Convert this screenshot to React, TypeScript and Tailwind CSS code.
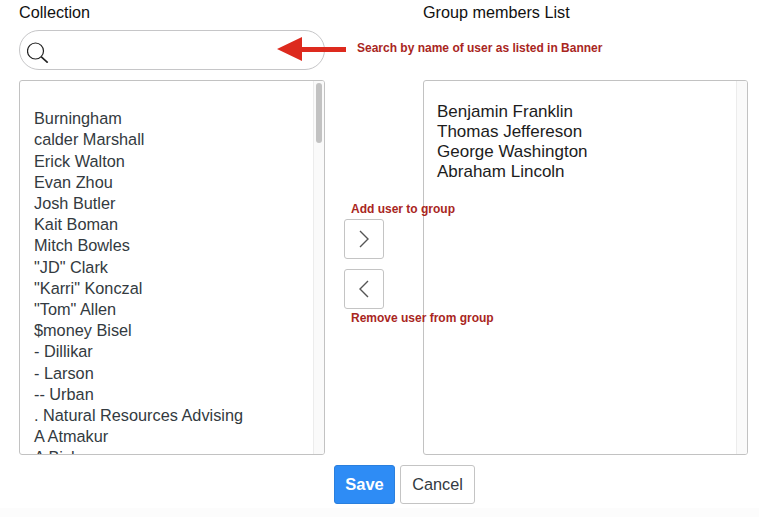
const collection = [
  "Burningham",
  "calder Marshall",
  "Erick Walton",
  "Evan Zhou",
  "Josh Butler",
  "Kait Boman",
  "Mitch Bowles",
  '"JD" Clark',
  '"Karri" Konczal',
  '"Tom" Allen',
  "$money Bisel",
  "- Dillikar",
  "- Larson",
  "-- Urban",
  ". Natural Resources Advising",
  "A Atmakur",
  "A Bishop",
];

const members = ["Benjamin Franklin", "Thomas Jeffereson", "George Washington", "Abraham Lincoln"];

function Note({ children, className }: { children: React.ReactNode; className: string }) {
  return <span className={"absolute text-[12px] leading-[14px] font-bold whitespace-nowrap text-[#a9261e] " + className}>{children}</span>;
}

function MoveButton({ points }: { points: string }) {
  return (
    <button className="w-10 h-10 flex items-center justify-center bg-white border border-[#c4c4c4] rounded-[3px]">
      <svg width="12" height="20" viewBox="0 0 12 20" fill="none" stroke="#555" strokeWidth="1.4">
        <polyline points={points} />
      </svg>
    </button>
  );
}

export default function App() {
  return (
    <div className="relative w-[759px] h-[517px] overflow-hidden bg-white font-['Liberation_Sans',Arial,sans-serif]">
      <div className="flex px-[19px] pt-[3px]">
        {/* Left column */}
        <div className="w-[306px] shrink-0">
          <div className="h-[20px] text-[16.2px] leading-[18px] text-[#111]">Collection</div>
          <div className="mt-[7px] h-[40px] flex items-center pl-[7px] border border-[#c6c6c8] rounded-[20px] bg-white">
            <svg width="24" height="26" viewBox="0 0 24 26" fill="none" stroke="#222">
              <circle cx="8.5" cy="14" r="8" strokeWidth="1.2" />
              <line x1="14.3" y1="19.8" x2="20.7" y2="25.7" strokeWidth="1.6" />
            </svg>
          </div>
          <div className="mt-[10px] h-[375px] flex overflow-hidden border border-[#c2c2c2] rounded-[3px]">
            <div className="flex-1 overflow-hidden pl-[14px] pt-[27.1px] text-[16.3px] leading-[21.2px] text-[#333a40]">
              {collection.map((name) => (
                <div key={name} className="whitespace-nowrap">{name}</div>
              ))}
            </div>
            <div className="w-[11px] shrink-0 pt-[2px] bg-[#fafafa] border-l border-[#ececec]">
              <div className="ml-[2px] w-[6px] h-[60px] rounded-[3px] bg-[#c2c2c2]" />
            </div>
          </div>
        </div>

        {/* Move buttons */}
        <div className="w-[98px] shrink-0 pl-[19px] pt-[216px] flex flex-col gap-[10px]">
          <MoveButton points="2,2 10,10 2,18" />
          <MoveButton points="10,2 2,10 10,18" />
        </div>

        {/* Right column */}
        <div className="w-[325px] shrink-0">
          <div className="h-[20px] text-[16.2px] leading-[18px] text-[#111]">Group members List</div>
          <div className="mt-[57px] h-[375px] flex overflow-hidden border border-[#c2c2c2] rounded-[3px]">
            <div className="flex-1 pl-[13px] pt-[21px] text-[17px] leading-[20px] text-[#1c1c1c]">
              {members.map((name) => (
                <div key={name}>{name}</div>
              ))}
            </div>
            <div className="w-[11px] shrink-0 bg-[#fafafa] border-l border-[#ececec]" />
          </div>
        </div>
      </div>

      <div className="flex justify-start gap-[5px] pl-[334px] mt-[10px]">
        <button className="w-[61px] h-[39px] bg-[#2e8cf5] border border-[#2a7fdd] rounded-[3px] text-[16.5px] font-bold text-white">Save</button>
        <button className="w-[75px] h-[39px] bg-white border border-[#c4c4c4] rounded-[3px] text-[16.3px] text-[#333a40]">Cancel</button>
      </div>
      <div className="mt-[4px] h-[9px] bg-[#fcfcfc]" />

      {/* Annotations */}
      <svg className="absolute left-[277px] top-[37px]" width="70" height="24" viewBox="0 0 70 24" fill="#dd2a1e">
        <polygon points="0,12 25,0 25,10 69,10 69,15 25,15 25,24" />
      </svg>
      <Note className="left-[357px] top-[41px]">Search by name of user as listed in Banner</Note>
      <Note className="left-[351px] top-[202px]">Add user to group</Note>
      <Note className="left-[351px] top-[311px]">Remove user from group</Note>
    </div>
  );
}
